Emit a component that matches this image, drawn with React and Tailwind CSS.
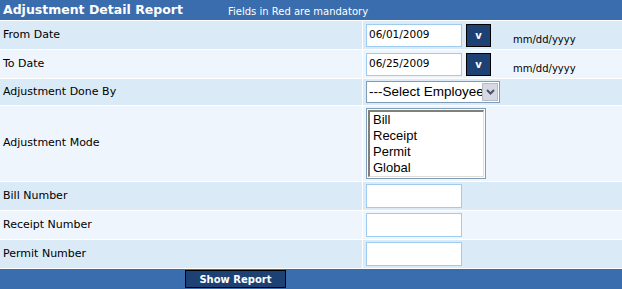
import React from "react";

const rows = [
  { label: "From Date", type: "date", value: "06/01/2009", dark: true, h: "h-[28px]" },
  { label: "To Date", type: "date", value: "06/25/2009", dark: false, h: "h-[28px]" },
  { label: "Adjustment Done By", type: "select", dark: true, h: "h-[26px]" },
  { label: "Adjustment Mode", type: "list", dark: false, h: "h-[75px]" },
  { label: "Bill Number", type: "text", dark: true, h: "h-[28px]" },
  { label: "Receipt Number", type: "text", dark: false, h: "h-[28px]" },
  { label: "Permit Number", type: "text", dark: true, h: "h-[28px]" },
];

const DateField = ({ value }) => (
  <div className="flex items-center h-full">
    <div className="w-[96px] h-[23px] bg-white border border-[#9ecbf0] flex items-center pl-[2px] text-[10.5px] text-black font-['DejaVu_Sans',sans-serif]">
      {value}
    </div>
    <div className="ml-[4px] w-[25px] h-[23px] bg-[#1e4173] border border-black flex items-center justify-center text-white font-bold text-[10px] font-['DejaVu_Sans',sans-serif]">
      v
    </div>
    <span className="ml-[22px] mt-[9px] text-[10px] text-black font-['DejaVu_Sans',sans-serif]">
      mm/dd/yyyy
    </span>
  </div>
);

const SelectField = () => (
  <div className="flex items-center h-full">
    <div className="w-[134px] h-[22px] bg-white border border-[#7f9db9] flex items-center overflow-hidden">
      <span className="flex-1 pl-[2px] whitespace-nowrap overflow-hidden text-[13.5px] leading-none text-black font-['Liberation_Sans',Arial,sans-serif]">
        ---Select Employee
      </span>
      <span className="w-[16px] h-[18px] mr-px bg-[#d6d9e4] border border-[#b5bccc] flex items-center justify-center">
        <svg width="9" height="6" viewBox="0 0 9 6">
          <path d="M1 1 L4.5 4.5 L8 1" stroke="#4d5366" strokeWidth="2" fill="none" />
        </svg>
      </span>
    </div>
  </div>
);

const ListField = () => (
  <div className="flex items-center h-full">
    <div className="w-[120px] h-[71px] bg-white border border-[#7f9db9] p-px">
      <div className="h-full border-t-2 border-l-2 border-t-[#808078] border-l-[#808078] border-r border-b border-r-[#e0ded6] border-b-[#e0ded6] pl-[3px] text-[13px] leading-[16px] text-black font-['Liberation_Sans',Arial,sans-serif]">
        <div>Bill</div>
        <div>Receipt</div>
        <div>Permit</div>
        <div>Global</div>
      </div>
    </div>
  </div>
);

const TextField = () => (
  <div className="flex items-center h-full">
    <div className="w-[96px] h-[24px] bg-white border border-[#9ecbf0]" />
  </div>
);

export default function App() {
  return (
    <div className="w-[622px] h-[289px] bg-white flex flex-col gap-px font-['DejaVu_Sans',Verdana,sans-serif] overflow-hidden">
      <div className="h-[20px] bg-[#3a6dae] flex items-center text-white shrink-0">
        <span className="pl-[3px] font-bold text-[12.5px] w-[228px]">Adjustment Detail Report</span>
        <span className="text-[10px] pt-[2px]">Fields in Red are mandatory</span>
      </div>
      {rows.map((r) => (
        <div key={r.label} className={`grid grid-cols-[362px_1fr] gap-px shrink-0 ${r.h}`}>
          <div className={`${r.dark ? "bg-[#dbeaf7]" : "bg-[#eef5fd]"} flex items-center pl-[3px] text-[11px] text-black`}>
            {r.label}
          </div>
          <div className={`${r.dark ? "bg-[#dbeaf7]" : "bg-[#eef5fd]"} pl-[3px]`}>
            {r.type === "date" && <DateField value={r.value} />}
            {r.type === "select" && <SelectField />}
            {r.type === "list" && <ListField />}
            {r.type === "text" && <TextField />}
          </div>
        </div>
      ))}
      <div className="flex-1 bg-[#3a6dae] flex items-center pl-[185px]">
        <div className="w-[101px] h-[18px] bg-[#1e4173] border border-black flex items-center justify-center text-white font-bold text-[10px]">
          Show Report
        </div>
      </div>
    </div>
  );
}
